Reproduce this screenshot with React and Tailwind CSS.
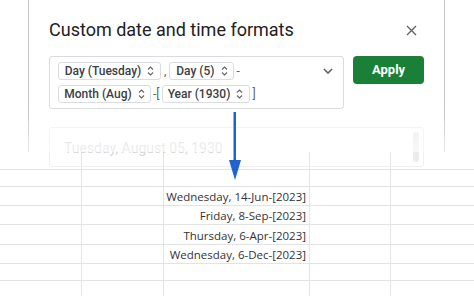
import React from "react";

function Updown() {
  return (
    <svg width="7" height="10" viewBox="0 0 7 10" className="ml-[6px] shrink-0">
      <path d="M1 3.5 L3.5 1 L6 3.5" fill="none" stroke="#5f6368" strokeWidth="1.1" />
      <path d="M1 6.5 L3.5 9 L6 6.5" fill="none" stroke="#5f6368" strokeWidth="1.1" />
    </svg>
  );
}

function Chip({ label, w }) {
  return (
    <div
      className={`h-[18px] ${w} flex items-center justify-center border border-[#dadce0] rounded-[3px] bg-white text-[12px] font-medium text-[#3c4043]`}
    >
      <span>{label}</span>
      <Updown />
    </div>
  );
}

const rows = [
  { h: "h-[18px]", t: "" },
  { h: "h-[17px]", t: "" },
  { h: "h-[19px]", t: "Wednesday, 14-Jun-[2023]" },
  { h: "h-[19px]", t: "Friday, 8-Sep-[2023]" },
  { h: "h-[20px]", t: "Thursday, 6-Apr-[2023]" },
  { h: "h-[19px]", t: "Wednesday, 6-Dec-[2023]" },
  { h: "h-[17px]", t: "" },
  { h: "h-[15px]", t: "" },
];

export default function App() {
  return (
    <div className="relative w-[474px] h-[299px] overflow-hidden bg-white font-['Roboto',sans-serif]">
      {/* dialog */}
      <div className="relative ml-[28px] w-[417px] h-[152px] border-x border-[#c4c4c4] bg-white pl-[20px] pr-[20px] pt-[18px]">
        <div className="flex items-center justify-between">
          <div className="text-[18px] leading-[24px] text-[#202124]">Custom date and time formats</div>
          <svg width="11" height="11" viewBox="0 0 11 11" className="mr-[7px]">
            <path d="M1 1 L10 10 M10 1 L1 10" stroke="#5f6368" strokeWidth="1.4" />
          </svg>
        </div>
        <div className="flex mt-[14px]">
          <div className="w-[296px] h-[53px] border border-[#dadce0] rounded-[3px] pl-[8px] pr-[10px] pt-[5px] flex">
            <div className="flex flex-col gap-[5px] flex-1">
              <div className="flex items-center text-[12px] text-[#5f6368]">
                <Chip label="Day (Tuesday)" w="w-[103px]" />
                <span className="mx-[3px]">,</span>
                <Chip label="Day (5)" w="w-[65px]" />
                <span className="ml-[2px]">-</span>
              </div>
              <div className="flex items-center text-[12px] text-[#5f6368]">
                <Chip label="Month (Aug)" w="w-[93px]" />
                <span className="mx-[2px]">-[</span>
                <Chip label="Year (1930)" w="w-[88px]" />
                <span className="ml-[3px]">]</span>
              </div>
            </div>
            <svg width="10" height="7" viewBox="0 0 10 7" className="mt-[6px]">
              <path d="M1 1 L5 5 L9 1" fill="none" stroke="#5f6368" strokeWidth="1.6" />
            </svg>
          </div>
          <button className="ml-[9px] w-[71px] h-[28px] rounded-[4px] bg-[#1a7f37] text-white text-[13px] font-bold">
            Apply
          </button>
        </div>
        <div className="relative mt-[18px] w-[375px] h-[40px] border border-[#f0f0f0] rounded-[3px] pl-[14px] pt-[10px]">
          <div className="text-[14px] text-[#d6d6d6]">Tuesday, August 05, 1930</div>
          <div className="absolute right-[4px] top-[4px] w-[6px] h-[30px] rounded-[3px] bg-[#ececec]" />
        </div>
        <div className="absolute left-[-1px] right-[-1px] bottom-0 h-[45px] bg-gradient-to-b from-white/0 to-white/60" />
      </div>

      {/* spreadsheet */}
      <div className="flex flex-col font-['Open_Sans',sans-serif] text-[11.5px] text-[#333]">
        {rows.map((r, i) => (
          <div
            key={i}
            className={`${r.h} grid grid-cols-[82px_82px_146px_81px_83px] ${i < 7 ? "border-b border-[#e3e3e3]" : ""}`}
          >
            <div className="border-r border-[#e6e6e6]" />
            <div className="border-r border-[#e6e6e6]" />
            <div className="border-r border-[#e6e6e6] flex items-center justify-end pr-[3px] pt-[2px] leading-none whitespace-nowrap">
              {r.t}
            </div>
            <div className="border-r border-[#e6e6e6]" />
            <div />
          </div>
        ))}
      </div>

      {/* arrow */}
      <svg className="absolute left-[226px] top-[112px]" width="18" height="70" viewBox="0 0 18 70">
        <rect x="7.5" y="0" width="2.5" height="52" fill="#1f63d1" />
        <path d="M3 48 L15 48 L9 68 Z" fill="#1f63d1" />
      </svg>
    </div>
  );
}
